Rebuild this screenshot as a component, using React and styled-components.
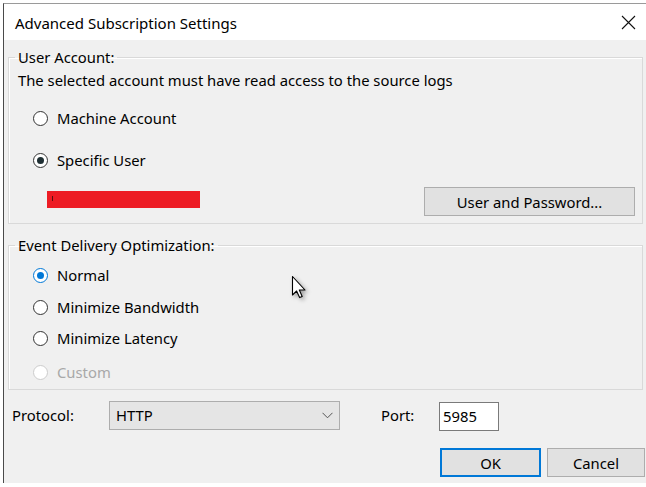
import React from 'react'
import styled, { createGlobalStyle } from 'styled-components'

const Global = createGlobalStyle`
  html, body {
    margin: 0;
    background: #ffffff;
    overflow: hidden;
  }
  body {
    font-family: "Noto Sans", "Open Sans", sans-serif;
    font-size: 14.8px;
    color: #000;
  }
`

const Screen = styled.div`
  width: 646px;
  height: 487px;
  padding: 3px 0 0 3px;
  box-sizing: border-box;
  overflow: hidden;
`

const Dialog = styled.div`
  position: relative;
  width: 643px;
  height: 480px;
  box-sizing: border-box;
  border-left: 1px solid #4a4a4a;
  border-top: 1px solid #9a9a9a;
  display: flex;
  flex-direction: column;
  background: #f0f0f0;
`

const TitleBar = styled.div`
  height: 36px;
  background: #ffffff;
  display: flex;
  align-items: center;
  justify-content: space-between;
  padding: 0 10px 0 11px;
`

const Title = styled.span`
  font-size: 15px;
  line-height: 20px;
  margin-top: 1px;
`

const Body = styled.div`
  flex: 1;
  display: flex;
  flex-direction: column;
  padding: 7px 3px 0 4px;
`

const Group = styled.fieldset`
  margin: ${p => p.$top || 0}px 0 0 0;
  padding: 0 7px ${p => p.$bottom || 0}px 9px;
  border: 1px solid #d9d9d9;
  box-shadow: inset 1px 1px 0 #ffffff;
  display: flex;
  flex-direction: column;
  min-width: 0;
`

const Legend = styled.legend`
  padding: 0 3px;
  margin-left: -3px;
  line-height: 20px;
`

const Text = styled.div`
  line-height: 20px;
  margin-top: ${p => p.$top || 0}px;
`

const RadioRow = styled.label`
  display: flex;
  align-items: center;
  height: 24px;
  margin: ${p => p.$top || 0}px 0 0 15px;
  gap: 9px;
  color: ${p => (p.$disabled ? '#a8a8a8' : '#000')};
`

const Circle = styled.span`
  width: 13px;
  height: 13px;
  border-radius: 50%;
  background: #ffffff;
  border: 1px solid ${p => (p.$disabled ? '#cccccc' : p.$focus ? '#0078d7' : '#333333')};
  display: flex;
  align-items: center;
  justify-content: center;
  flex-shrink: 0;

  &::after {
    content: '';
    width: 7px;
    height: 7px;
    border-radius: 50%;
    background: ${p => (p.$focus ? '#0078d7' : '#1f2f33')};
    display: ${p => (p.$checked ? 'block' : 'none')};
  }
`

const CredRow = styled.div`
  display: flex;
  justify-content: space-between;
  align-items: flex-start;
  margin-top: 15px;
  padding-left: 29px;
`

const Redacted = styled.div`
  width: 153px;
  height: 17px;
  margin-top: 4px;
  background: #ed1c24;
  position: relative;

  &::before {
    content: '';
    position: absolute;
    left: 5px;
    top: 5px;
    width: 1px;
    height: 5px;
    background: #5a1010;
  }
`

const Button = styled.button`
  font: inherit;
  color: #000;
  width: ${p => p.$w}px;
  height: 29px;
  background: #e1e1e1;
  border: 1px solid ${p => (p.$default ? '#0078d7' : '#adadad')};
  box-shadow: ${p => (p.$default ? 'inset 0 0 0 1px #0078d7' : 'none')};
  padding: 0;
  line-height: 20px;
`

const FieldRow = styled.div`
  display: flex;
  align-items: center;
  margin-top: 10px;
  height: 30px;
`

const FieldLabel = styled.span`
  width: ${p => p.$w}px;
  padding-left: ${p => p.$pad || 0}px;
  box-sizing: border-box;
  line-height: 20px;
`

const Select = styled.div`
  width: 231px;
  height: 29px;
  box-sizing: border-box;
  background: #e5e5e5;
  border: 1px solid #adadad;
  display: flex;
  align-items: center;
  justify-content: space-between;
  padding: 0 6px 0 6px;
  margin-right: 41px;
`

const Input = styled.div`
  width: 60px;
  height: 29px;
  box-sizing: border-box;
  background: #ffffff;
  border: 1px solid #7a7a7a;
  display: flex;
  align-items: center;
  padding-left: 3px;
  margin-top: 2px;
`

const Actions = styled.div`
  display: flex;
  justify-content: flex-end;
  gap: 6px;
  margin-top: 18px;
  margin-right: -2px;
`

const Cursor = styled.svg`
  position: absolute;
  left: 284px;
  top: 269px;
  filter: drop-shadow(2px 2px 2px rgba(0, 0, 0, 0.35));
`

function Radio({ label, checked, focus, disabled, top }) {
  return (
    <RadioRow $top={top} $disabled={disabled}>
      <Circle $checked={checked} $focus={focus} $disabled={disabled} />
      {label}
    </RadioRow>
  )
}

export default function App() {
  return (
    <Screen>
      <Global />
      <Dialog>
        <TitleBar>
          <Title>Advanced Subscription Settings</Title>
          <svg width="15" height="15" viewBox="0 0 15 15">
            <path d="M1 1 L14 14 M14 1 L1 14" stroke="#111" strokeWidth="1.1" />
          </svg>
        </TitleBar>
        <Body>
          <Group $bottom={7}>
            <Legend>User Account:</Legend>
            <Text $top={3}>The selected account must have read access to the source logs</Text>
            <Radio label="Machine Account" top={16} />
            <Radio label="Specific User" checked top={18} />
            <CredRow>
              <Redacted />
              <Button $w={211}>User and Password...</Button>
            </CredRow>
          </Group>
          <Group $top={11} $bottom={5}>
            <Legend>Event Delivery Optimization:</Legend>
            <Radio label="Normal" checked focus top={8} />
            <Radio label="Minimize Bandwidth" top={8} />
            <Radio label="Minimize Latency" top={7} />
            <Radio label="Custom" disabled top={10} />
          </Group>
          <FieldRow>
            <FieldLabel $w={101} $pad={4}>Protocol:</FieldLabel>
            <Select>
              <span>HTTP</span>
              <svg width="11" height="7" viewBox="0 0 11 7">
                <path d="M0.5 0.8 L5.5 5.8 L10.5 0.8" fill="none" stroke="#555" strokeWidth="1" />
              </svg>
            </Select>
            <FieldLabel $w={58}>Port:</FieldLabel>
            <Input>5985</Input>
          </FieldRow>
          <Actions>
            <Button $w={101} $default>OK</Button>
            <Button $w={98}>Cancel</Button>
          </Actions>
        </Body>
        <Cursor width="18" height="27" viewBox="0 0 18 27">
          <path
            d="M4.5 3.5 L4.5 22 L8.6 18 L11.6 24.6 L14.2 23.4 L11.3 17 L17 17 Z"
            fill="#ffffff"
            stroke="#000"
            strokeWidth="1.1"
            strokeLinejoin="round"
          />
        </Cursor>
      </Dialog>
    </Screen>
  )
}
